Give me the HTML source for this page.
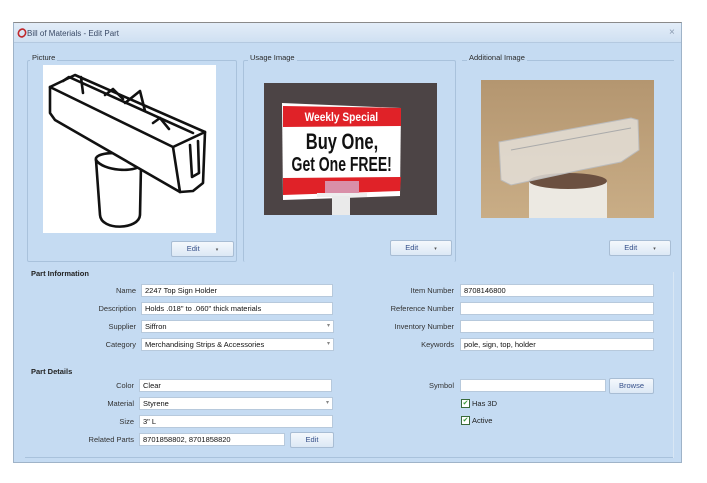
<!DOCTYPE html>
<html><head><meta charset="utf-8"><style>
*{margin:0;padding:0;box-sizing:border-box}
body{width:707px;height:483px;background:#fff;position:relative;overflow:hidden;font-family:"Liberation Sans",sans-serif;font-size:7.5px;color:#1e1e1e}
.a{position:absolute}
.win{left:13px;top:22px;width:669px;height:441px;background:#c5dbf2;border:1px solid #9fb3c8;border-top:1px solid #8a8a8a}
.title{left:0;top:0;width:667px;height:20px;background:linear-gradient(#e3edf8,#cfe0f2);border-bottom:1px solid #b4c9e0}
.gb{border:1px solid #a9c2dc;border-radius:2px}
.lbl{background:#c5dbf2;padding:0 2px;color:#2a2a2a}
.lab{text-align:right;color:#333;width:120px}
.in{background:#fff;border:1px solid #b7c9dc;height:13px;padding-left:3px;line-height:11px;color:#111}
.dd:after{content:"▾";position:absolute;right:3px;top:0;color:#888;font-size:6px}
.btn{background:linear-gradient(#f4f8fc,#dce8f5);border:1px solid #a8bdd4;border-radius:2px;text-align:center;color:#36508a;line-height:14px}
.hd{font-weight:bold;color:#222}
.cb{width:9px;height:9px;border:1px solid #3a6a3a;background:#fff;color:#3a9a3a;font-size:7px;line-height:8px;text-align:center}
</style></head><body>
<div class="a win">
 <div class="a title"></div>
</div>
<svg class="a" style="left:17px;top:28px" width="10" height="10"><ellipse cx="5" cy="5" rx="3.5" ry="4" fill="none" stroke="#c0282c" stroke-width="1.6" transform="rotate(30 5 5)"/></svg>
<div class="a" style="left:27px;top:29px;color:#3a4a66;font-size:8px">Bill of Materials - Edit Part</div>
<div class="a" style="left:669px;top:27px;color:#8a9ab0;font-size:10px">×</div>

<div class="a gb" style="left:27px;top:60px;width:210px;height:202px"></div>
<div class="a lbl" style="left:30px;top:53px">Picture</div>
<div class="a gb" style="left:243px;top:60px;width:213px;height:202px;border-bottom:none"></div>
<div class="a lbl" style="left:248px;top:53px">Usage Image</div>
<div class="a" style="left:462px;top:60px;width:212px;height:1px;background:#a9c2dc"></div>
<div class="a lbl" style="left:467px;top:53px">Additional Image</div>

<svg class="a" style="left:43px;top:65px" width="173" height="168" viewBox="0 0 173 168">
<rect width="173" height="168" fill="#fff"/>
<g fill="#fff" stroke="#111" stroke-width="2.6" stroke-linejoin="round" stroke-linecap="round">
<path d="M53 95 C50 85,97 85,98 100 L97 150 C96 165,58 166,57 150 Z"/>
<path d="M53 95 C60 106,92 108,98 100" fill="none"/>
<path d="M7 22 L32 10 L162 67 L160 118 L150 126 L137 127 L12 55 L7 48 Z"/>
<path d="M7 22 L130 82 L162 67" fill="none"/>
<path d="M130 82 L137 127" fill="none"/>
<path d="M20 16 L26 12 L150 68 M38 12 L40 28 M82 38 L97 26 L102 46" fill="none"/>
<path d="M62 30 L70 24 L80 34 M110 58 L117 53 L126 64" fill="none"/>
<path d="M147 80 L149 112 L156 108 L155 76" fill="none"/>
</g></svg>

<svg class="a" style="left:264px;top:83px" width="173" height="132" viewBox="0 0 173 132">
<rect width="173" height="132" fill="#4c4445"/>
<polygon points="18,20 137,25 136,113 19,117" fill="#fff"/>
<polygon points="19,23 137,25 137,43 19,44" fill="#e02228"/>
<polygon points="19,98 137,97 136,111 19,115" fill="#e02228" transform="translate(0,-3)"/>
<rect x="61" y="98" width="34" height="12" fill="#d98fa8"/>
<rect x="53" y="110" width="50" height="4" fill="#eee"/>
<rect x="68" y="113" width="18" height="19" fill="#eaeaea"/>
<text x="78" y="38" font-family="Liberation Sans" font-weight="bold" font-size="12" fill="#fff" text-anchor="middle" transform="scale(0.85,1) translate(13,0)">Weekly Special</text>
<text x="78" y="66" font-family="Liberation Sans" font-weight="bold" font-size="22" fill="#111" text-anchor="middle" transform="scale(0.75,1) translate(26,0)">Buy One,</text>
<text x="78" y="88" font-family="Liberation Sans" font-weight="bold" font-size="20" fill="#111" text-anchor="middle" transform="scale(0.7,1) translate(33,0)">Get One FREE!</text>
</svg>

<svg class="a" style="left:481px;top:80px" width="173" height="138" viewBox="0 0 173 138">
<defs><linearGradient id="g" x1="0" y1="0" x2="0" y2="1"><stop offset="0" stop-color="#b49670"/><stop offset="1" stop-color="#c9ad86"/></linearGradient></defs>
<rect width="173" height="138" fill="url(#g)"/>
<rect x="48" y="100" width="78" height="38" fill="#ece9e2"/>
<ellipse cx="87" cy="101" rx="39" ry="8" fill="#6b5040"/>
<path d="M18 62 L150 38 L157 40 L158 70 L140 82 L100 90 L30 105 L20 100 Z" fill="#e6e3de" fill-opacity=".8" stroke="#bbb"/>
<path d="M30 70 L150 48" stroke="#aaa" fill="none"/>
</svg>

<div class="a btn" style="left:171px;top:241px;width:63px;height:16px">Edit <span style="margin-left:14px;font-size:5px;color:#555">▾</span></div>
<div class="a btn" style="left:390px;top:240px;width:62px;height:16px">Edit <span style="margin-left:14px;font-size:5px;color:#555">▾</span></div>
<div class="a btn" style="left:609px;top:240px;width:62px;height:16px">Edit <span style="margin-left:14px;font-size:5px;color:#555">▾</span></div>

<div class="a" style="left:673px;top:272px;width:1px;height:186px;background:#d8e6f4"></div>
<div class="a" style="left:25px;top:457px;width:648px;height:1px;background:#a9c2dc"></div>

<div class="a hd" style="left:31px;top:269px">Part Information</div>
<div class="a lab" style="left:16px;top:286px">Name</div><div class="a in" style="left:141px;top:284px;width:192px">2247 Top Sign Holder</div>
<div class="a lab" style="left:16px;top:304px">Description</div><div class="a in" style="left:141px;top:302px;width:192px">Holds .018" to .060" thick materials</div>
<div class="a lab" style="left:16px;top:322px">Supplier</div><div class="a in dd" style="left:141px;top:320px;width:193px">Siffron</div>
<div class="a lab" style="left:16px;top:340px">Category</div><div class="a in dd" style="left:141px;top:338px;width:193px">Merchandising Strips &amp; Accessories</div>

<div class="a lab" style="left:334px;top:286px">Item Number</div><div class="a in" style="left:460px;top:284px;width:194px">8708146800</div>
<div class="a lab" style="left:334px;top:304px">Reference Number</div><div class="a in" style="left:460px;top:302px;width:194px"></div>
<div class="a lab" style="left:334px;top:322px">Inventory Number</div><div class="a in" style="left:460px;top:320px;width:194px"></div>
<div class="a lab" style="left:334px;top:340px">Keywords</div><div class="a in" style="left:460px;top:338px;width:194px">pole, sign, top, holder</div>

<div class="a hd" style="left:31px;top:367px">Part Details</div>
<div class="a lab" style="left:14px;top:381px">Color</div><div class="a in" style="left:139px;top:379px;width:193px">Clear</div>
<div class="a lab" style="left:14px;top:399px">Material</div><div class="a in dd" style="left:139px;top:397px;width:194px">Styrene</div>
<div class="a lab" style="left:14px;top:417px">Size</div><div class="a in" style="left:139px;top:415px;width:194px">3" L</div>
<div class="a lab" style="left:14px;top:435px">Related Parts</div><div class="a in" style="left:139px;top:433px;width:146px">8701858802, 8701858820</div>
<div class="a btn" style="left:290px;top:432px;width:44px;height:16px">Edit</div>

<div class="a lab" style="left:334px;top:381px">Symbol</div><div class="a in" style="left:460px;top:379px;width:146px"></div>
<div class="a btn" style="left:609px;top:378px;width:45px;height:16px">Browse</div>
<div class="a cb" style="left:461px;top:399px">✔</div><div class="a" style="left:472px;top:399px">Has 3D</div>
<div class="a cb" style="left:461px;top:416px">✔</div><div class="a" style="left:472px;top:416px">Active</div>
</body></html>
